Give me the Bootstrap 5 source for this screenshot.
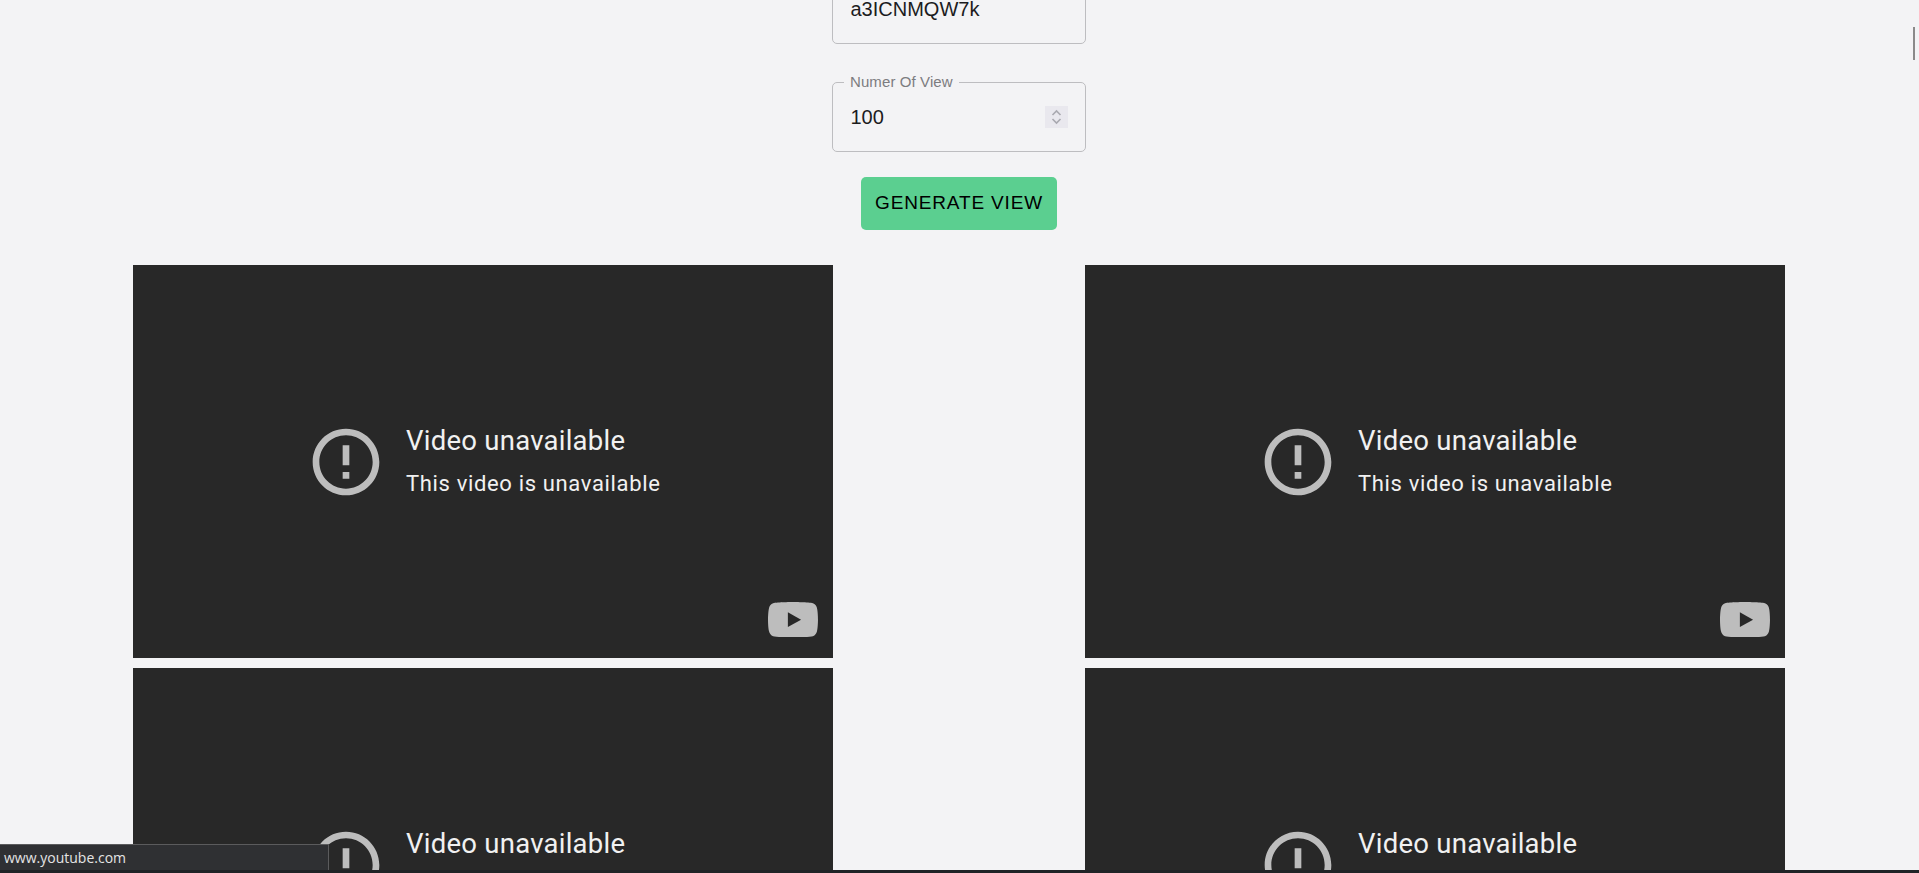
<!DOCTYPE html>
<html lang="en">
<head>
<meta charset="utf-8">
<title>Generate View</title>
<link rel="stylesheet" href="https://cdn.jsdelivr.net/npm/bootstrap@5.3.0/dist/css/bootstrap.min.css">
<style>
html,body{height:873px;overflow:hidden}
body{background:#1f2326;font-family:"Liberation Sans",Arial,sans-serif}
.page-view{height:870px;background:#f3f3f5;overflow:hidden;position:relative}
.form-wrap{padding-right:1px}
.form-stack{width:254px;margin-top:-26px}
.view-field{height:70px;padding:0 17.5px;background:transparent;border:1px solid #bdbdc0;border-radius:5px;font-size:20px;line-height:16px;color:#1c1c1e;position:relative}
.view-field + .view-field{margin-top:38px}
.view-legend{position:absolute;left:11px;top:-10px;padding:0 6px;background:#f3f3f5;font-size:15px;line-height:18px;letter-spacing:.1px;color:#7c7c80}
.view-spin{width:23px;height:22px;background:#e9e8ee}
.gen-btn{width:196px;height:53px;margin-top:25px;padding:0;background:#5bcf90;border:0;border-radius:5px;font-size:19px;letter-spacing:.85px;color:#000}
.gen-btn:hover{background:#5bcf90;color:#000}
.video-grid{padding:35px 134px 0 133px;row-gap:10px}
.video-tile{width:700px;height:393px;background:#282828;color:#f1f1f1;font-family:Roboto,sans-serif;position:relative;flex:none}
.video-msg{padding-left:172.5px;height:100%;padding-top:1px}
.video-alert{width:80px;height:80px;margin-right:20.5px;flex:none}
.video-copy{padding-bottom:3px}
.video-title{font-size:27.5px;line-height:32px;margin-bottom:14px;letter-spacing:.25px}
.video-sub{font-size:22px;line-height:26px;letter-spacing:.65px}
.yt-mark{position:absolute;right:15px;bottom:21px;width:50px;height:35.3px}
.url-bubble{position:absolute;left:0;bottom:0;width:329px;height:26px;background:#2f3033;border-top:1px solid #5b5b5d;border-right:1px solid #5b5b5d;padding-left:4px;font-family:"Open Sans",sans-serif;font-size:14px;line-height:25px;color:#e4e4e4}
.thumb-bar{position:absolute;left:1913px;top:27px;width:2px;height:33px;background:#8a8a8a}
</style>
</head>
<body>
<main class="page-view">
  <div class="form-wrap d-flex flex-column align-items-center">
    <div class="form-stack d-flex flex-column align-items-center">
      <div class="form-control view-field w-100 d-flex align-items-center">a3ICNMQW7k</div>
      <div class="form-control view-field w-100 d-flex align-items-center justify-content-between">
        <span class="view-legend">Numer Of View</span>
        <span>100</span>
        <span class="view-spin d-flex align-items-center justify-content-center">
          <svg width="11" height="16" viewBox="0 0 11 16" fill="none" stroke="#a9a9b0" stroke-width="1.6"><path d="M1.5 6 5.5 2 9.5 6M1.5 10 5.5 14 9.5 10"/></svg>
        </span>
      </div>
      <button type="button" class="btn gen-btn">GENERATE VIEW</button>
    </div>
  </div>
  <section class="video-grid d-flex flex-wrap justify-content-between">
    <div class="video-tile">
      <div class="video-msg d-flex align-items-center">
        <svg class="video-alert" viewBox="0 0 48 48" fill="#bdbdbd"><path d="M22 30h4v4h-4zm0-16h4v12h-4z"/><path d="M23.99 4C12.94 4 4 12.95 4 24s8.94 20 19.99 20C35.04 44 44 35.05 44 24S35.04 4 23.99 4zM24 40c-8.84 0-16-7.16-16-16S15.16 8 24 8s16 7.16 16 16-7.16 16-16 16z"/></svg>
        <div class="video-copy"><div class="video-title">Video unavailable</div><div class="video-sub">This video is unavailable</div></div>
      </div>
      <svg class="yt-mark" viewBox="0 0 68 48"><path fill="#bdbdbd" d="M66.52 7.74c-.78-2.93-2.49-5.41-5.42-6.19C55.79.13 34 0 34 0S12.21.13 6.9 1.55C3.97 2.33 2.27 4.81 1.48 7.74.06 13.05 0 24 0 24s.06 10.95 1.48 16.26c.78 2.93 2.49 5.41 5.42 6.19C12.21 47.87 34 48 34 48s21.79-.13 27.1-1.55c2.93-.78 4.64-3.26 5.42-6.19C67.94 34.95 68 24 68 24s-.06-10.95-1.48-16.26z"/><path fill="#282828" d="M45 24 27 14v20z"/></svg>
    </div>
    <div class="video-tile">
      <div class="video-msg d-flex align-items-center">
        <svg class="video-alert" viewBox="0 0 48 48" fill="#bdbdbd"><path d="M22 30h4v4h-4zm0-16h4v12h-4z"/><path d="M23.99 4C12.94 4 4 12.95 4 24s8.94 20 19.99 20C35.04 44 44 35.05 44 24S35.04 4 23.99 4zM24 40c-8.84 0-16-7.16-16-16S15.16 8 24 8s16 7.16 16 16-7.16 16-16 16z"/></svg>
        <div class="video-copy"><div class="video-title">Video unavailable</div><div class="video-sub">This video is unavailable</div></div>
      </div>
      <svg class="yt-mark" viewBox="0 0 68 48"><path fill="#bdbdbd" d="M66.52 7.74c-.78-2.93-2.49-5.41-5.42-6.19C55.79.13 34 0 34 0S12.21.13 6.9 1.55C3.97 2.33 2.27 4.81 1.48 7.74.06 13.05 0 24 0 24s.06 10.95 1.48 16.26c.78 2.93 2.49 5.41 5.42 6.19C12.21 47.87 34 48 34 48s21.79-.13 27.1-1.55c2.93-.78 4.64-3.26 5.42-6.19C67.94 34.95 68 24 68 24s-.06-10.95-1.48-16.26z"/><path fill="#282828" d="M45 24 27 14v20z"/></svg>
    </div>
    <div class="video-tile">
      <div class="video-msg d-flex align-items-center">
        <svg class="video-alert" viewBox="0 0 48 48" fill="#bdbdbd"><path d="M22 30h4v4h-4zm0-16h4v12h-4z"/><path d="M23.99 4C12.94 4 4 12.95 4 24s8.94 20 19.99 20C35.04 44 44 35.05 44 24S35.04 4 23.99 4zM24 40c-8.84 0-16-7.16-16-16S15.16 8 24 8s16 7.16 16 16-7.16 16-16 16z"/></svg>
        <div class="video-copy"><div class="video-title">Video unavailable</div><div class="video-sub">This video is unavailable</div></div>
      </div>
    </div>
    <div class="video-tile">
      <div class="video-msg d-flex align-items-center">
        <svg class="video-alert" viewBox="0 0 48 48" fill="#bdbdbd"><path d="M22 30h4v4h-4zm0-16h4v12h-4z"/><path d="M23.99 4C12.94 4 4 12.95 4 24s8.94 20 19.99 20C35.04 44 44 35.05 44 24S35.04 4 23.99 4zM24 40c-8.84 0-16-7.16-16-16S15.16 8 24 8s16 7.16 16 16-7.16 16-16 16z"/></svg>
        <div class="video-copy"><div class="video-title">Video unavailable</div><div class="video-sub">This video is unavailable</div></div>
      </div>
    </div>
  </section>
  <div class="url-bubble">www.youtube.com</div>
  <div class="thumb-bar"></div>
</main>
<script src="https://cdn.jsdelivr.net/npm/bootstrap@5.3.0/dist/js/bootstrap.bundle.min.js"></script>
</body>
</html>
